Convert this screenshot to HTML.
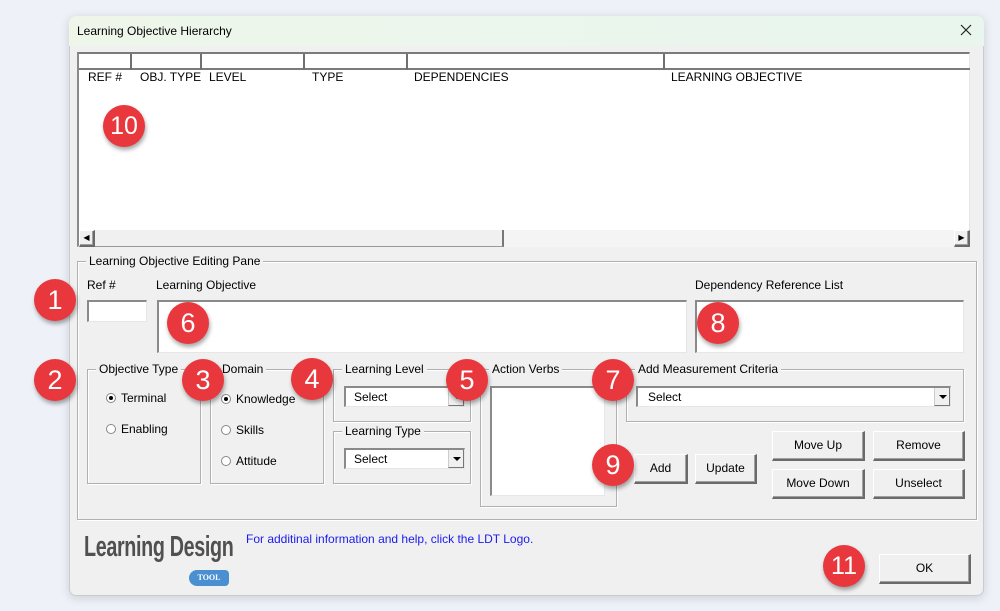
<!DOCTYPE html><html><head><style>
*{box-sizing:border-box;margin:0;padding:0}
body{width:1000px;height:611px;background:#eef2f8;font-family:"Liberation Sans",sans-serif;font-size:12px;color:#000;position:relative;overflow:hidden}
.a{position:absolute}
.win{left:69px;top:16px;width:915px;height:580px;background:#f0f0f0;border:1px solid #c8ccd0;border-radius:7px;box-shadow:0 2px 10px rgba(0,0,0,.15)}
.title{left:69px;top:16px;width:915px;height:30px;background:linear-gradient(90deg,#eef6ea,#e8f6ee);border-radius:7px 7px 0 0}
.in{background:#fff;border-top:2px solid #8a8a8a;border-left:2px solid #8a8a8a;border-right:1px solid #e6e6e6;border-bottom:1px solid #e6e6e6}
.grp{border:1px solid #b0b0b0;box-shadow:inset 1px 1px 0 #fff,1px 1px 0 #fff}
.gl{position:absolute;top:-8px;left:8px;background:#f0f0f0;padding:0 3px;font-size:12px}
.btn{background:#f0f0f0;border:1px solid #fff;border-right:2px solid #6a6a6a;border-bottom:2px solid #6a6a6a;box-shadow:inset -1px -1px 0 #a0a0a0;text-align:center;font-size:12px}
.c{width:42px;height:42px;border-radius:50%;background:#e8383d;color:#fff;font-size:27px;text-align:center;line-height:42px;box-shadow:1px 3px 4px rgba(0,0,0,.35)}
.rad{display:inline-block;width:10px;height:10px;border-radius:50%;border:1px solid #888;background:#fff;position:relative;margin-right:5px;vertical-align:-1px}
.rad.on::after{content:"";position:absolute;left:2px;top:2px;width:4px;height:4px;border-radius:50%;background:#000}
.dd{position:absolute;right:0;top:0;width:16px;height:100%;background:#f0f0f0;border-left:1px solid #ccc;border-right:1px solid #777;border-bottom:1px solid #777}
.dd::after{content:"";position:absolute;left:4px;top:7px;border-left:4px solid transparent;border-right:4px solid transparent;border-top:4px solid #000}
.hd{position:absolute;top:0;height:16px;border-right:2px solid #707070}
</style></head><body>
<div class="a win"></div>
<div class="a title"></div>
<div class="a" style="left:77px;top:24px;font-size:12px">Learning Objective Hierarchy</div>
<svg class="a" style="left:960px;top:24px" width="12" height="12" viewBox="0 0 12 12"><path d="M1 1L11 11M11 1L1 11" stroke="#222" stroke-width="1.2"/></svg>

<div class="a in" style="left:77px;top:52px;width:893px;height:195px;border-top:2px solid #7a7a7a">
 <div class="a" style="left:0;top:0;width:891px;height:16px;border-bottom:2px solid #7a7a7a"></div>
 <div class="hd" style="left:0;width:53px"></div>
 <div class="hd" style="left:53px;width:70px"></div>
 <div class="hd" style="left:123px;width:103px"></div>
 <div class="hd" style="left:226px;width:103px"></div>
 <div class="hd" style="left:329px;width:257px"></div>
 <div class="a" style="left:9px;top:16px">REF #</div>
 <div class="a" style="left:61px;top:16px">OBJ. TYPE</div>
 <div class="a" style="left:130px;top:16px">LEVEL</div>
 <div class="a" style="left:233px;top:16px">TYPE</div>
 <div class="a" style="left:335px;top:16px">DEPENDENCIES</div>
 <div class="a" style="left:592px;top:16px">LEARNING OBJECTIVE</div>
 <div class="a" style="left:0;top:176px;width:891px;height:17px;background:#f4f4f4"></div>
 <div class="a btn" style="left:0;top:176px;width:16px;height:17px;font-size:8px;line-height:14px">◀</div>
 <div class="a" style="left:16px;top:176px;width:409px;height:17px;background:#f0f0f0;border-right:2px solid #777;border-bottom:1px solid #999"></div>
 <div class="a btn" style="left:875px;top:176px;width:16px;height:17px;font-size:8px;line-height:14px">▶</div>
</div>

<div class="a grp" style="left:77px;top:261px;width:900px;height:259px"><span class="gl" style="left:8px">Learning Objective Editing Pane</span></div>
<div class="a" style="left:87px;top:278px">Ref #</div>
<div class="a in" style="left:87px;top:300px;width:60px;height:22px"></div>
<div class="a" style="left:156px;top:278px">Learning Objective</div>
<div class="a in" style="left:157px;top:300px;width:530px;height:53px"></div>
<div class="a" style="left:695px;top:278px">Dependency Reference List</div>
<div class="a in" style="left:695px;top:300px;width:269px;height:53px"></div>

<div class="a grp" style="left:87px;top:369px;width:114px;height:115px"><span class="gl">Objective Type</span>
 <div class="a" style="left:18px;top:21px"><span class="rad on"></span>Terminal</div>
 <div class="a" style="left:18px;top:52px"><span class="rad"></span>Enabling</div></div>
<div class="a grp" style="left:210px;top:369px;width:114px;height:115px"><span class="gl">Domain</span>
 <div class="a" style="left:10px;top:22px"><span class="rad on"></span>Knowledge</div>
 <div class="a" style="left:10px;top:53px"><span class="rad"></span>Skills</div>
 <div class="a" style="left:10px;top:84px"><span class="rad"></span>Attitude</div></div>
<div class="a grp" style="left:333px;top:369px;width:138px;height:53px"><span class="gl">Learning Level</span>
 <div class="a in" style="left:10px;top:16px;width:121px;height:21px;padding:2px 8px">Select<div class="dd"></div></div></div>
<div class="a grp" style="left:333px;top:431px;width:138px;height:53px"><span class="gl">Learning Type</span>
 <div class="a in" style="left:10px;top:16px;width:121px;height:21px;padding:2px 8px">Select<div class="dd"></div></div></div>
<div class="a grp" style="left:480px;top:369px;width:137px;height:138px"><span class="gl">Action Verbs</span>
 <div class="a in" style="left:9px;top:16px;width:115px;height:110px"></div></div>
<div class="a grp" style="left:626px;top:369px;width:338px;height:53px"><span class="gl">Add Measurement Criteria</span>
 <div class="a in" style="left:9px;top:16px;width:315px;height:21px;padding:2px 10px">Select<div class="dd"></div></div></div>

<div class="a btn" style="left:634px;top:454px;width:54px;height:30px;line-height:27px">Add</div>
<div class="a btn" style="left:695px;top:454px;width:62px;height:30px;line-height:27px">Update</div>
<div class="a btn" style="left:772px;top:431px;width:93px;height:30px;line-height:27px">Move Up</div>
<div class="a btn" style="left:873px;top:431px;width:92px;height:30px;line-height:27px">Remove</div>
<div class="a btn" style="left:772px;top:469px;width:93px;height:30px;line-height:27px">Move Down</div>
<div class="a btn" style="left:873px;top:469px;width:92px;height:30px;line-height:27px">Unselect</div>
<div class="a btn" style="left:879px;top:554px;width:92px;height:30px;line-height:27px">OK</div>

<div class="a" style="left:246px;top:532px;color:#1a1af0">For additinal information and help, click the LDT Logo.</div>
<div class="a" style="left:84px;top:531px;font-size:29px;font-weight:bold;color:#505050;transform:scaleX(.68);transform-origin:left;white-space:nowrap;letter-spacing:-0.5px">Learning Design</div>
<div class="a" style="left:189px;top:570px;width:40px;height:16px;border-radius:8px 4px 4px 8px;background:#4a8fcf;color:#fff;font-size:8px;font-weight:bold;text-align:center;line-height:16px;font-family:'Liberation Serif',serif">TOOL</div>

<div class="a c" style="left:34px;top:279px">1</div>
<div class="a c" style="left:34px;top:359px">2</div>
<div class="a c" style="left:182px;top:359px">3</div>
<div class="a c" style="left:291px;top:358px">4</div>
<div class="a c" style="left:446px;top:359px">5</div>
<div class="a c" style="left:167px;top:302px">6</div>
<div class="a c" style="left:592px;top:359px">7</div>
<div class="a c" style="left:697px;top:302px">8</div>
<div class="a c" style="left:592px;top:444px">9</div>
<div class="a c" style="left:103px;top:105px;font-size:25px">10</div>
<div class="a c" style="left:823px;top:545px;font-size:25px">11</div>
</body></html>
